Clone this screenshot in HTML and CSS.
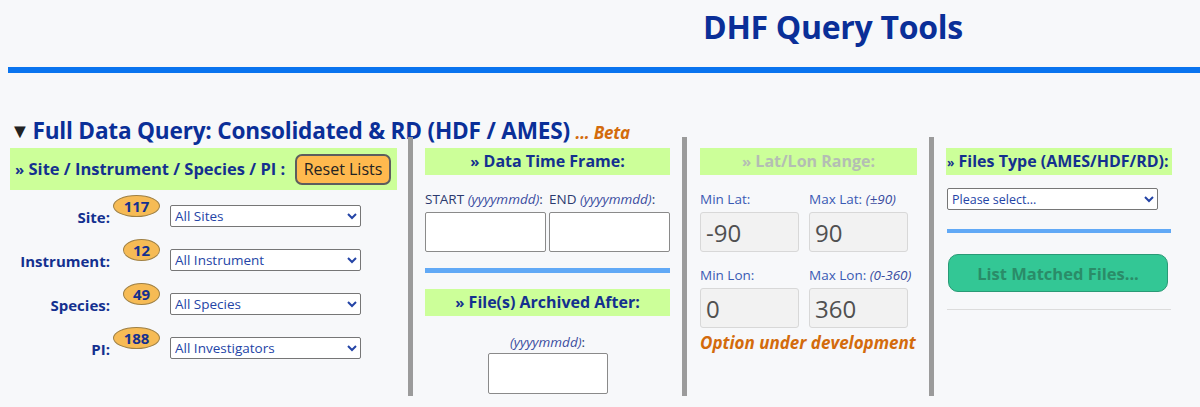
FILE: index.html
```html
<!DOCTYPE html>
<html lang="en">
<head>
<meta charset="utf-8">
<title>DHF Query Tools</title>
<link rel="stylesheet" href="styles.css">
</head>
<body>
<header class="page-head">
  <h1 class="page-title">DHF Query Tools</h1>
</header>
<div class="rule-blue"></div>

<section class="query">
  <h2 class="query-title"><span class="tri">▼</span> Full Data Query: Consolidated &amp; RD (HDF / AMES) <span class="beta">... Beta</span></h2>

  <div class="cols">
    <div class="col col-1">
      <div class="bar bar-tall">
        <span class="bar-text"><span class="raquo">»</span> Site / Instrument / Species / PI :</span>
        <button class="btn-reset" type="button">Reset Lists</button>
      </div>
      <div class="rows">
        <div class="row">
          <div class="row-label"><span class="lbl">Site:</span><span class="badge badge-3">117</span></div>
          <select class="sel"><option>All Sites</option></select>
        </div>
        <div class="row">
          <div class="row-label"><span class="lbl">Instrument:</span><span class="badge">12</span></div>
          <select class="sel"><option>All Instrument</option></select>
        </div>
        <div class="row">
          <div class="row-label"><span class="lbl">Species:</span><span class="badge">49</span></div>
          <select class="sel"><option>All Species</option></select>
        </div>
        <div class="row">
          <div class="row-label"><span class="lbl">PI:</span><span class="badge badge-3">188</span></div>
          <select class="sel"><option>All Investigators</option></select>
        </div>
      </div>
    </div>

    <div class="col col-2">
      <div class="bar bar-center"><span class="raquo">»</span> Data Time Frame:</div>
      <div class="pair">
        <div class="field">
          <div class="flabel">START <i>(yyyymmdd)</i>:</div>
          <input class="inp inp-date" type="text">
        </div>
        <div class="field">
          <div class="flabel">END <i>(yyyymmdd)</i>:</div>
          <input class="inp inp-date" type="text">
        </div>
      </div>
      <div class="rule-light"></div>
      <div class="bar bar-center bar-gap"><span class="raquo">»</span> File(s) Archived After:</div>
      <div class="archived">
        <div class="flabel flabel-c"><i>(yyyymmdd)</i>:</div>
        <input class="inp inp-arch" type="text">
      </div>
    </div>

    <div class="col col-3">
      <div class="bar bar-center bar-disabled"><span class="raquo">»</span> Lat/Lon Range:</div>
      <div class="grid-ll">
        <div class="field">
          <div class="flabel flabel-blue">Min Lat:</div>
          <input class="inp inp-ll" type="text" value="-90" disabled>
        </div>
        <div class="field">
          <div class="flabel flabel-blue">Max Lat: <i>(±90)</i></div>
          <input class="inp inp-ll" type="text" value="90" disabled>
        </div>
        <div class="field">
          <div class="flabel flabel-blue">Min Lon:</div>
          <input class="inp inp-ll" type="text" value="0" disabled>
        </div>
        <div class="field">
          <div class="flabel flabel-blue">Max Lon: <i>(0-360)</i></div>
          <input class="inp inp-ll" type="text" value="360" disabled>
        </div>
      </div>
      <div class="dev-note">Option under development</div>
    </div>

    <div class="col col-4">
      <div class="bar bar-left"><span class="raquo raquo-sm">»</span> Files Type (AMES/HDF/RD):</div>
      <select class="sel sel-type"><option>Please select...</option></select>
      <div class="rule-light rule-light-4"></div>
      <button class="btn-list" type="button" disabled>List Matched Files...</button>
      <div class="rule-thin"></div>
    </div>
  </div>
</section>
</body>
</html>
```

FILE: styles.css
```css
html, body {
  background: #f7f8fa;
}
body {
  margin: 0 0 0 8px;
  font-family: "Open Sans", "Noto Sans", "Liberation Sans", sans-serif;
  color: #1a2f8f;
}
.page-head {
  height: 67px;
  display: flex;
  justify-content: flex-start;
}
.page-title {
  margin: 6px 0 0 695px;
  font-size: 32px;
  font-weight: 700;
  color: #0a2f98;
  letter-spacing: -0.3px;
  line-height: 42px;
}
.rule-blue {
  height: 6px;
  background: #0a74ef;
}
.query-title {
  margin: 44px 0 0 2px;
  font-size: 22.6px;
  font-weight: 700;
  color: #0a2f98;
  line-height: 28px;
  letter-spacing: -0.2px;
  height: 20px;
  white-space: nowrap;
}
.tri {
  color: #222;
  font-size: 20px;
  vertical-align: 1px;
  letter-spacing: -3px;
}
.beta {
  color: #d36b0c;
  font-style: italic;
  font-size: 17px;
}
.cols {
  margin-top: 0;
  display: flex;
  align-items: stretch;
  height: 259px;
}
.col {
  padding-top: 11px;
  box-sizing: border-box;
}
.col-1 {
  width: 400px;
  padding-left: 2px;
  padding-right: 11px;
}
.col-2 {
  width: 274px;
  border-left: 5px solid #9b9b9b;
  padding-left: 12px;
  padding-right: 12px;
}
.col-3 {
  width: 247px;
  border-left: 5px solid #9b9b9b;
  padding-left: 13px;
  padding-right: 12px;
}
.col-4 {
  width: 243px;
  border-left: 5px solid #9b9b9b;
  padding-left: 12px;
  padding-right: 0;
}
.bar {
  background: #ccff99;
  font-weight: 700;
  font-size: 16px;
  color: #14308f;
  height: 27px;
  line-height: 27px;
  white-space: nowrap;
}
.raquo {
  font-size: 15px;
}
.raquo-sm {
  font-size: 12px;
}
.bar-tall {
  height: 42px;
  display: flex;
  align-items: center;
  justify-content: space-between;
  padding: 0 6px 0 5px;
  font-size: 16.5px;
}
.bar-center {
  text-align: center;
}
.bar-left {
  padding-left: 1px;
  font-size: 16px;
}
.bar-gap {
  margin-top: 16px;
}
.bar-disabled {
  color: #b4bdb4;
}
.btn-reset {
  font-family: inherit;
  font-size: 16px;
  color: #222;
  background: #ffb94e;
  border: 2px solid #5d5d5d;
  border-radius: 7px;
  height: 31px;
  width: 96px;
  padding: 0;
  line-height: 26px;
}
.rows {
  padding-top: 15px;
  display: flex;
  flex-direction: column;
  gap: 22px;
}
.row {
  display: flex;
  align-items: center;
  height: 22px;
}
.row-label {
  width: 150px;
  height: 22px;
  display: flex;
  justify-content: flex-end;
  align-items: center;
  position: relative;
}
.lbl {
  font-weight: 700;
  font-size: 15px;
  color: #14308f;
  line-height: 20px;
  margin-right: 50px;
  margin-top: 1px;
}
.badge {
  position: absolute;
  right: 0;
  top: -10px;
  height: 20px;
  min-width: 35px;
  border: 1px solid #9e8045;
  border-radius: 50%;
  background: #f6bb55;
  font-weight: 700;
  font-size: 15px;
  line-height: 20px;
  text-align: center;
  color: #14308f;
}
.badge-3 {
  min-width: 45px;
}
.sel {
  margin-left: 10px;
  width: 191px;
  height: 22px;
  font-family: inherit;
  font-size: 13.5px;
  color: #2444a6;
  background: #fff;
  border: 1px solid #767676;
  border-radius: 2px;
}
.pair {
  margin-top: 15px;
  display: flex;
  gap: 3px;
}
.field {
  display: flex;
  flex-direction: column;
}
.flabel {
  font-size: 13.5px;
  color: #2c3a6e;
  line-height: 18px;
  height: 19px;
  white-space: nowrap;
}
.pair .flabel,
.grid-ll .flabel {
  margin-bottom: 3px;
}
.flabel i {
  color: #3a4ca0;
}
.flabel-blue {
  color: #3a5ab4;
}
.flabel-c {
  text-align: center;
}
.inp {
  box-sizing: border-box;
  font-family: inherit;
  background: #fff;
  border: 1px solid #8a8a8a;
  border-radius: 2px;
  margin: 0;
  padding: 0 4px;
}
.inp-date {
  width: 121px;
  height: 40px;
}
.rule-light {
  height: 5px;
  background: #61a9f6;
  margin-top: 16px;
}
.archived {
  margin-top: 17px;
  display: flex;
  flex-direction: column;
  align-items: center;
}
.inp-arch {
  width: 120px;
  height: 41px;
  margin-top: 1px;
}
.grid-ll {
  margin-top: 15px;
  display: grid;
  grid-template-columns: 99px 99px;
  column-gap: 10px;
  row-gap: 14px;
}
.inp-ll {
  width: 99px;
  height: 40px;
  background: #f2f2f2;
  border: 1px solid #d8d8d8;
  border-radius: 3px;
  font-size: 24px;
  color: #505050;
  padding-left: 5px;
}
.dev-note {
  margin-top: 3px;
  color: #d36b0c;
  font-weight: 700;
  font-style: italic;
  font-size: 17px;
  white-space: nowrap;
}
.sel-type {
  margin: 13px 0 0 1px;
  width: 211px;
  height: 22px;
  font-size: 12.5px;
}
.rule-light-4 {
  margin-top: 19px;
  margin-left: 1px;
  height: 4px;
  width: 224px;
}
.btn-list {
  margin: 21px 0 0 2px;
  width: 220px;
  height: 38px;
  background: #33c795;
  border: 1px solid #2a9a76;
  border-radius: 10px;
  font-family: inherit;
  font-weight: 700;
  font-size: 16.5px;
  color: #2a8c68;
  padding: 0;
}
.rule-thin {
  margin: 17px 0 0 1px;
  width: 224px;
  height: 1px;
  background: #dcdcdc;
}
```
